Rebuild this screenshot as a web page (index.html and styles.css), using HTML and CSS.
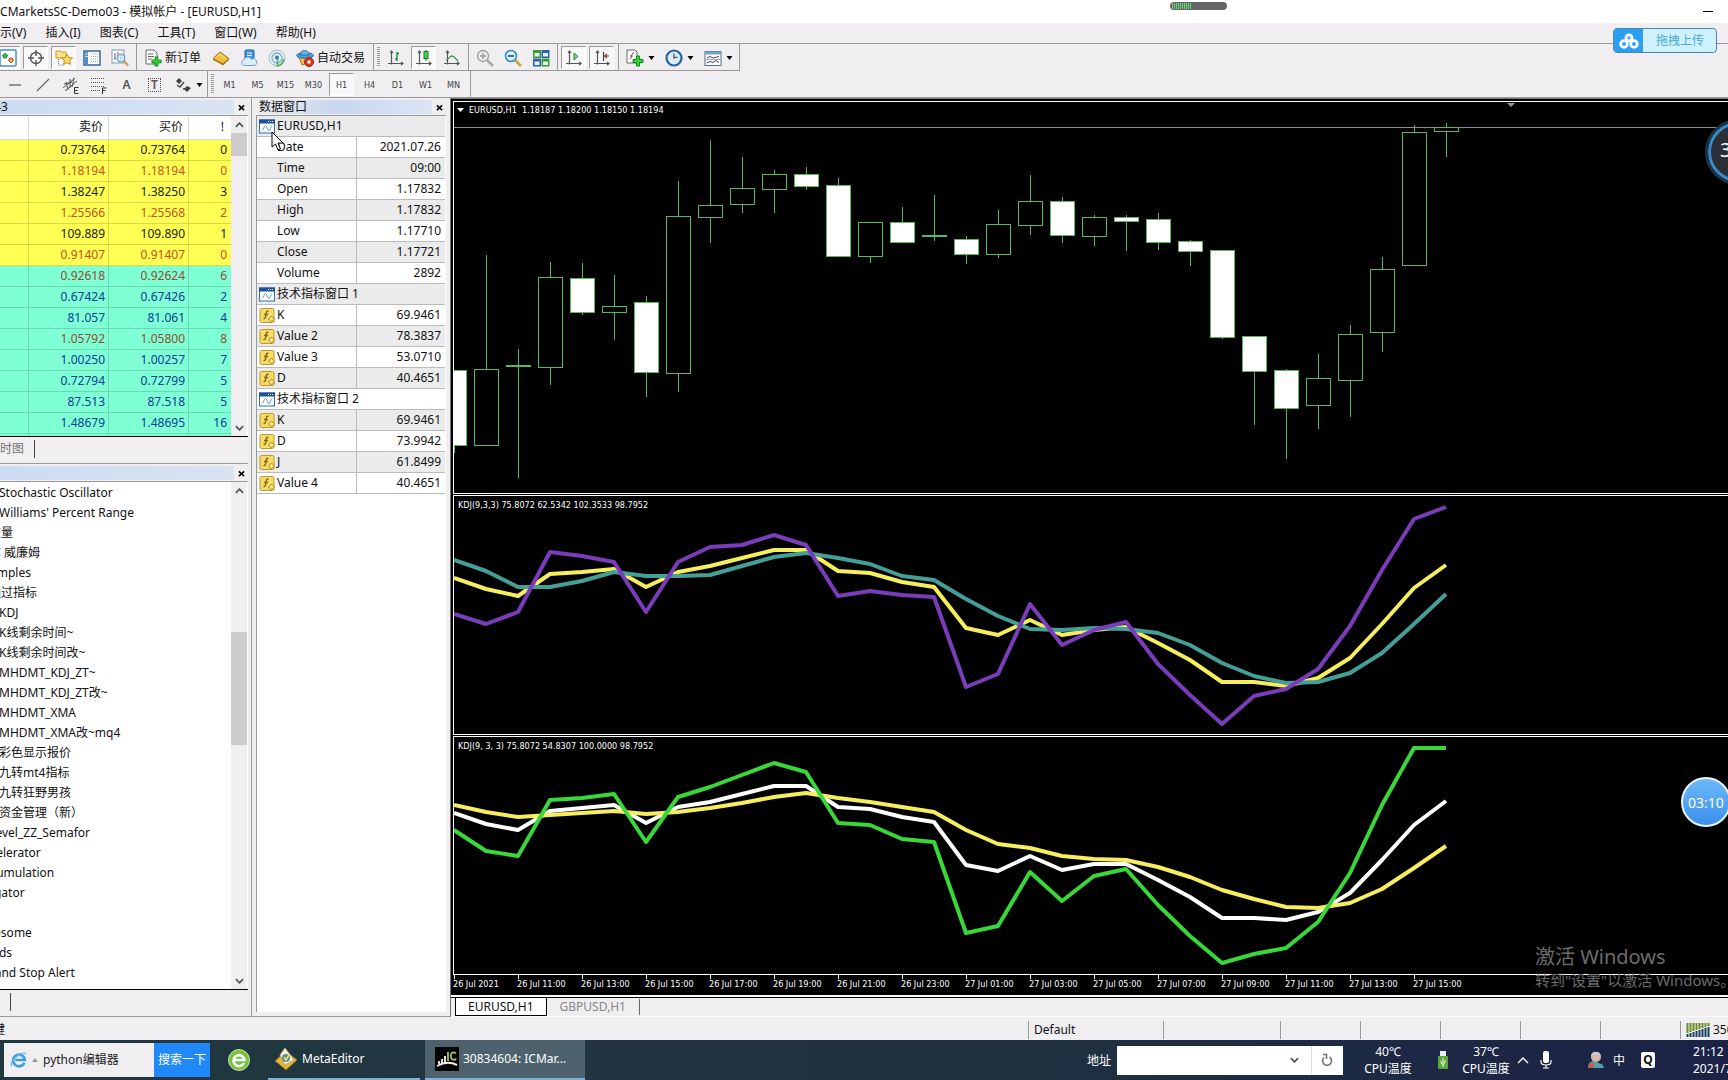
FILE: index.html
```html
<!DOCTYPE html>
<html lang="zh-CN">
<head>
  <meta charset="UTF-8">
  <meta name="viewport" content="width=device-width, initial-scale=1.0">
  <title>ICMarketsSC-Demo03 - [EURUSD,H1]</title>
  <link rel="stylesheet" href="styles.css">
</head>
<body>
  <svg class="sprite" aria-hidden="true">
    <symbol id="i-close" viewBox="0 0 8 8"><path d="M1 1.5l6 5.5M7 1.5L1 7" stroke="#000" stroke-width="1.8"/></symbol>
    <symbol id="i-up" viewBox="0 0 10 6"><path d="M1 5l4-4 4 4" fill="none" stroke="#555" stroke-width="2"/></symbol>
    <symbol id="i-down" viewBox="0 0 10 6"><path d="M1 1l4 4 4-4" fill="none" stroke="#555" stroke-width="2"/></symbol>
    <symbol id="i-drop" viewBox="0 0 6 4"><path d="M0 0h6L3 4z" fill="#000"/></symbol>
    <symbol id="i-window" viewBox="0 0 16 14">
      <rect x=".5" y=".5" width="15" height="13" fill="#fff" stroke="#2c6cb4"/>
      <path d="M0 0h16v4H0z" fill="#1d4f9c"/><path d="M9 2h1M11 2h1M13 2h1" stroke="#fff"/>
      <path d="M3 11c2-1 2-5 3.500-5s2 5 3.500 5 1.500-4 3-5" fill="none" stroke="#5a9ac8"/>
    </symbol>
    <symbol id="i-func" viewBox="0 0 16 15">
      <rect x="1" y=".5" width="14" height="14" rx="1.500" fill="#f3dc6a" stroke="#c09a28"/>
      <path d="M9.500 3.500c-2-.8-2.300 1-2.500 3S6.500 11 4.500 10.500M5 6.500h4" fill="none" stroke="#8a6410" stroke-width="1.400"/>
      <path d="M12.500 8l3 3-3 3-3-3z" fill="#f8e788" stroke="#a8841c"/>
    </symbol>
    <symbol id="i-plus" viewBox="0 0 12 12"><path d="M4.500 1h3v3.500H11v3H7.500V11h-3V7.500H1v-3h3.500z" fill="#35d435" stroke="#0b8a16"/></symbol>
    <symbol id="i-axes" viewBox="0 0 18 18"><path d="M4.500 2v13.500M1 14.500h14.500M3 4l1.500-2L6 4M14 13l2 1.500-2 1.500" fill="none" stroke="#555" stroke-width="1.200"/></symbol>
  </svg>

  <header class="titlebar">
    <h1 class="title">ICMarketsSC-Demo03 - 模拟帐户 - [EURUSD,H1]</h1>
    <div class="rec-pill"></div>
    <button class="minimize" aria-label="最小化"></button>
  </header>

  <nav class="menubar">
    <button>显示(V)</button>
    <button>插入(I)</button>
    <button>图表(C)</button>
    <button>工具(T)</button>
    <button>窗口(W)</button>
    <button>帮助(H)</button>
  </nav>

  <div class="toolbar main-tools">
    <button class="tool on" aria-label="市场报价"><svg viewBox="0 0 18 18"><rect x="1" y="1" width="16" height="16" rx="1" fill="#fff" stroke="#4a90c8" stroke-width="1.500"/><path d="M6 4l3 3H7.500v2h-3V7H3z" fill="#3bbf5b" stroke="#11813a" stroke-width=".8"/><path d="M12 14l-3-3h1.500V9h3v2H15z" fill="#f2a45c" stroke="#b5401c" stroke-width=".8"/></svg></button>
    <button class="tool on" aria-label="数据窗口"><svg viewBox="0 0 18 18"><circle cx="9" cy="9" r="5.500" fill="none" stroke="#555" stroke-width="1.400"/><path d="M9 1v6M9 11v6M1 9h6M11 9h6" stroke="#555" stroke-width="1.400"/></svg></button>
    <button class="tool on" aria-label="导航"><svg viewBox="0 0 18 18"><path d="M1 2h4l1 1h5v6H1z" fill="#ffe58a" stroke="#c79a20"/><path d="M3.500 10v6h6" fill="none" stroke="#777" stroke-dasharray="1 1"/><path d="M12 5l1.600 3.600 3.900.4-2.900 2.600.8 3.900-3.400-2-3.400 2 .8-3.900L6.500 9l3.900-.4z" fill="#ffdf5e" stroke="#c08a14"/></svg></button>
    <button class="tool" aria-label="终端"><svg viewBox="0 0 18 18"><rect x="1" y="2" width="16" height="14" fill="#fff" stroke="#33689c" stroke-width="1.500"/><path d="M2 3h3v12H2z" fill="#4c8fce"/><path d="M8 5h8M8 7.500h8M8 10h8M8 12.500h8" stroke="#9ab0c6" stroke-dasharray="1 1"/><path d="M2.500 5h2M2.500 7.500h2" stroke="#fff"/></svg></button>
    <button class="tool" aria-label="策略测试"><svg viewBox="0 0 18 18"><rect x="1" y="1" width="12" height="13" fill="#f4f8fb" stroke="#8a9bac"/><path d="M4 4v7M3 9h1M7 3v6M10 5v6M10 6h2" stroke="#667"/><circle cx="10" cy="9" r="4" fill="#cfe7f8" fill-opacity=".8" stroke="#5d92bd"/><path d="M13 12l4 4.500" stroke="#c8a04a" stroke-width="2.400"/></svg></button>
    <span class="sep"></span>
    <button class="tool wide"><svg viewBox="0 0 18 18"><path d="M2 1h8l3 3v11H2z" fill="#fff" stroke="#666"/><path d="M4 5h5M4 7.500h6M4 10h4" stroke="#666"/><use href="#i-plus" x="7" y="7" width="11" height="11"/></svg>新订单</button>
    <button class="tool" aria-label="MetaEditor"><svg viewBox="0 0 18 18"><path d="M1 9.500L8 3l9 6.500-6 6.500z" fill="#f0bf3e" stroke="#9d6d12"/><path d="M1 9.500L11 14l6-4.500v1.500L11 16 1 11z" fill="#b07a16"/><path d="M5 8l3-3 5 4" stroke="#ffe9a2" fill="none"/></svg></button>
    <button class="tool" aria-label="虚拟主机"><svg viewBox="0 0 18 18"><rect x="5" y="1" width="9" height="9" rx="1" fill="#3e96dc" stroke="#1e62a4"/><path d="M7 4h5M7 6.500h5" stroke="#e5f4ff"/><path d="M3.500 16.500a3 3 0 010-5.500 4.500 4.500 0 018-1 3.300 3.300 0 013.500 6.500z" fill="#dceefb" stroke="#6f9fc8"/></svg></button>
    <button class="tool" aria-label="信号"><svg viewBox="0 0 18 18" fill="none"><circle cx="9" cy="9" r="8" fill="#e3eff2" stroke="#9dbfd0"/><circle cx="9" cy="9" r="5" stroke="#7fb0c4" stroke-width="1.300"/><circle cx="9" cy="8.500" r="2" fill="#2e7ac0"/><path d="M9.500 10v7c4-1 6-4 6-7" stroke="#58b058" stroke-width="1.600"/></svg></button>
    <button class="tool wide"><svg viewBox="0 0 18 18"><path d="M3 8h11l-2 6-6 2z" fill="#f0c04a" stroke="#a87a18"/><ellipse cx="9" cy="6.500" rx="8.500" ry="2.800" fill="#4c9fd6" stroke="#2a70a8"/><path d="M4 6c0-6 9-6 9 0z" fill="#64b4e4" stroke="#2a70a8"/><circle cx="13" cy="13" r="4.500" fill="#d5391c" stroke="#9c2410"/><path d="M11.500 11.500h3v3h-3z" fill="#fff"/></svg>自动交易</button>
    <span class="sep"></span><span class="grip"></span>
    <button class="tool" aria-label="柱状图"><svg viewBox="0 0 18 18"><use href="#i-axes"/><path d="M10 3v9M8 10h2M10 4.500h2" stroke="#1e8a3a" stroke-width="1.400" fill="none"/></svg></button>
    <button class="tool on" aria-label="阴阳烛"><svg viewBox="0 0 18 18"><use href="#i-axes"/><path d="M11 1v11" stroke="#167a2c"/><rect x="9" y="2.500" width="4" height="7" fill="#3cd65c" stroke="#167a2c"/></svg></button>
    <button class="tool" aria-label="折线图"><svg viewBox="0 0 18 18"><use href="#i-axes"/><path d="M3 11c3-1 4-4 6-4s3 2 6 5" stroke="#3c9a50" stroke-width="1.300" fill="none"/></svg></button>
    <span class="sep"></span>
    <button class="tool" aria-label="放大"><svg viewBox="0 0 18 18"><path d="M11 11l6 6" stroke="#aaa" stroke-width="2.600"/><circle cx="7" cy="7" r="5.500" fill="#eee" stroke="#999" stroke-width="1.300"/><path d="M4 7h6M7 4v6" stroke="#999" stroke-width="1.500"/></svg></button>
    <button class="tool" aria-label="缩小"><svg viewBox="0 0 18 18"><path d="M11 11l6 6" stroke="#d0a53c" stroke-width="2.800"/><circle cx="7" cy="7" r="5.500" fill="#d8effc" stroke="#2f86c8" stroke-width="1.500"/><path d="M4 7h6" stroke="#20649c" stroke-width="1.800"/></svg></button>
    <button class="tool" aria-label="平铺窗口"><svg viewBox="0 0 18 18"><path d="M1 1h8v8H1zM9.500 9.500h8v8h-8z" fill="#3b9b34"/><path d="M9.500 1h8v8h-8zM1 9.500h8v8H1z" fill="#2f62ac"/><path d="M2.500 4h5v3.500h-5zM11 4h5v3.500h-5zM2.500 12.500h5V16h-5zM11 12.500h5V16h-5z" fill="#e4f0f4"/></svg></button>
    <span class="sep"></span>
    <button class="tool on" aria-label="自动滚动"><svg viewBox="0 0 18 18"><use href="#i-axes"/><path d="M9 4l4 3.500L9 11z" fill="#7ddc8c" stroke="#1e8a3a"/></svg></button>
    <button class="tool on" aria-label="图表平移"><svg viewBox="0 0 18 18"><use href="#i-axes"/><path d="M10.500 3v9" stroke="#444" stroke-width="1.200"/><path d="M16 7h-4M14 5l-2.500 2L14 9" stroke="#8c3a2a" fill="none" stroke-width="1.200"/></svg></button>
    <span class="sep"></span>
    <button class="tool drop" aria-label="技术指标"><svg viewBox="0 0 18 18"><path d="M1 1h8l2 2v11H1z" fill="#fff" stroke="#666"/><path d="M8 4C5 3 6 10 4 10M4 7h3" stroke="#555" fill="none"/><use href="#i-plus" x="6" y="6" width="12" height="12"/></svg><svg class="arrow"><use href="#i-drop"/></svg></button>
    <button class="tool drop" aria-label="时间周期"><svg viewBox="0 0 18 18"><circle cx="9" cy="9" r="7.500" fill="#d8ecfa" stroke="#23639e" stroke-width="2.200"/><path d="M9 4.500V9l3.500-1" stroke="#444" stroke-width="1.200" fill="none"/></svg><svg class="arrow"><use href="#i-drop"/></svg></button>
    <button class="tool drop" aria-label="模板"><svg viewBox="0 0 18 18"><rect x="1" y="2.500" width="16" height="14" fill="#fff" stroke="#4a7094"/><path d="M1 2.500h16v3H1z" fill="#6fa4ce"/><path d="M3 9l3-1.500 3 1.500 6-1.500M3 14l3-1.500 3 1 3-2 3 2" stroke="#445" fill="none"/><path d="M1 10.500h16" stroke="#9ab"/></svg><svg class="arrow"><use href="#i-drop"/></svg></button>
  </div>

  <div class="toolbar line-tools">
    <button class="tool" aria-label="水平线"><svg viewBox="0 0 18 18"><path d="M3 9h12" stroke="#555" stroke-width="1.200"/></svg></button>
    <button class="tool" aria-label="趋势线"><svg viewBox="0 0 18 18"><path d="M3 15L15 3" stroke="#666" stroke-width="1.200"/></svg></button>
    <button class="tool" aria-label="等距通道"><svg viewBox="0 0 18 18"><path d="M1 12L13 2M3 15L15 5M4 6l2 8M8 3l0 9M12 2l-2 9M2 8l8-2" stroke="#555" fill="none"/><path d="M16.500 11.500h-4v6h4M12.500 14.500h3" stroke="#333" fill="none"/></svg></button>
    <button class="tool" aria-label="斐波那契"><svg viewBox="0 0 18 18"><path d="M1 2.500h14M1 6.500h14M1 10.500h14M1 14.500h9" stroke="#555" stroke-dasharray="1 1"/><path d="M16.500 12h-4v6M12.500 14.500h3" stroke="#333" fill="none"/></svg></button>
    <button class="tool letter" aria-label="文字">A</button>
    <button class="tool letter" aria-label="文字标签"><span class="label-box">T</span></button>
    <button class="tool drop" aria-label="箭头"><svg viewBox="0 0 18 18"><path d="M5 2l3 3-3 3-3-3zM13 10l4 2-4 4-3-3z" fill="#444"/><path d="M3 9l3 2 4-5M9 13l6-1" stroke="#444" stroke-width="1.400" fill="none"/></svg><svg class="arrow"><use href="#i-drop"/></svg></button>
    <span class="sep"></span><span class="grip"></span>
    <button class="tool period">M1</button>
    <button class="tool period">M5</button>
    <button class="tool period">M15</button>
    <button class="tool period">M30</button>
    <button class="tool period on">H1</button>
    <button class="tool period">H4</button>
    <button class="tool period">D1</button>
    <button class="tool period">W1</button>
    <button class="tool period">MN</button>
    <span class="sep"></span>
  </div>

  <main class="workspace">
    <div class="side">
      <section class="market">
        <div class="panel-title"><span>市场报价: 21:12:43</span><button aria-label="关闭"><svg><use href="#i-close"/></svg></button></div>
        <div class="scroll-area">
          <table class="quotes">
            <thead><tr><th></th><th>卖价</th><th>买价</th><th>!</th></tr></thead>
            <tbody id="quotes"></tbody>
          </table>
          <div class="scrollbar">
            <button aria-label="向上"><svg><use href="#i-up"/></svg></button>
            <div class="thumb"></div>
            <button aria-label="向下"><svg><use href="#i-down"/></svg></button>
          </div>
        </div>
        <div class="panel-tabs"><button>即时图</button></div>
      </section>
      <section class="navigator">
        <div class="panel-title"><span></span><button aria-label="关闭"><svg><use href="#i-close"/></svg></button></div>
        <div class="scroll-area">
          <ul class="tree">
            <li class="sub">Stochastic Oscillator</li>
            <li class="sub">Williams' Percent Range</li>
            <li>成交量</li>
            <li>比尔 威廉姆</li>
            <li>Examples</li>
            <li>已通过指标</li>
            <li class="sub">KDJ</li>
            <li class="sub">K线剩余时间~</li>
            <li class="sub">K线剩余时间改~</li>
            <li class="sub">MHDMT_KDJ_ZT~</li>
            <li class="sub">MHDMT_KDJ_ZT改~</li>
            <li class="sub">MHDMT_XMA</li>
            <li class="sub">MHDMT_XMA改~mq4</li>
            <li class="sub">彩色显示报价</li>
            <li class="sub">九转mt4指标</li>
            <li class="sub">九转狂野男孩</li>
            <li class="sub">资金管理（新）</li>
            <li>3_Level_ZZ_Semafor</li>
            <li>Accelerator</li>
            <li>Accumulation</li>
            <li>Alligator</li>
            <li>ATR</li>
            <li>Awesome</li>
            <li>Bands</li>
            <li>Be and Stop Alert</li>
          </ul>
          <div class="scrollbar">
            <button aria-label="向上"><svg><use href="#i-up"/></svg></button>
            <div class="thumb"></div>
            <button aria-label="向下"><svg><use href="#i-down"/></svg></button>
          </div>
        </div>
        <div class="panel-tabs"><button aria-label="常用"></button></div>
      </section>
    </div>

    <section class="data-window">
      <div class="panel-title"><span>数据窗口</span><button aria-label="关闭"><svg><use href="#i-close"/></svg></button></div>
      <div class="data-body">
        <table class="values">
          <colgroup><col class="name-col"><col></colgroup>
          <tbody id="values"></tbody>
        </table>
      </div>
    </section>

    <section class="charts">
      <div class="canvas">
        <div class="pane price">
          <p class="caption"><svg class="arrow"><path d="M0 0h7L3.500 4z" fill="#fff"/></svg>EURUSD,H1&nbsp; 1.18187 1.18200 1.18150 1.18194</p>
          <svg class="plot" id="price"></svg>
        </div>
        <div class="pane osc">
          <p class="caption">KDJ(9,3,3) 75.8072 62.5342 102.3533 98.7952</p>
          <svg class="plot" id="kdj1"></svg>
        </div>
        <div class="pane osc">
          <p class="caption">KDJ(9, 3, 3) 75.8072 54.8307 100.0000 98.7952</p>
          <svg class="plot" id="kdj2"></svg>
        </div>
        <div class="axis" id="axis"></div>
        <div class="watermark">
          <p class="big">激活 Windows</p>
          <p>转到"设置"以激活 Windows。</p>
        </div>
      </div>
      <div class="chart-tabs">
        <button class="active">EURUSD,H1</button>
        <button>GBPUSD,H1</button>
      </div>
    </section>
  </main>

  <footer class="status">
    <span class="help">请按F1键</span>
    <span class="cell profile">Default</span>
    <span class="cell date"></span>
    <span class="cell"></span>
    <span class="cell"></span>
    <span class="cell"></span>
    <span class="cell"></span>
    <span class="cell"></span>
    <span class="cell net"><svg viewBox="0 0 24 14"><path d="M1.500 0v10M4.500 0v9M7.500 0v8M10.500 0v7M13.500 0v6M16.500 0v5M19.500 0v4M22.500 0v3" stroke="#6b8a28" stroke-width="2"/><path d="M1.500 11v3M4.500 10v4M7.500 9v5M10.500 8v6M13.500 7v7M16.500 6v8M19.500 5v9M22.500 4v10" stroke="#17405c" stroke-width="2"/></svg>350/2 kb</span>
  </footer>

  <div class="taskbar">
    <div class="search">
      <svg class="ie" viewBox="0 0 20 20"><path d="M16 13a6.500 6.500 0 11.500-3H6" fill="none" stroke="#3ba0e2" stroke-width="3"/><path d="M2 17C-1 12 12 0 18 3" fill="none" stroke="#6dbcec" stroke-width="1.500"/></svg>
      <svg class="tri" viewBox="0 0 6 4"><path d="M0 4h6L3 0z" fill="#999"/></svg>
      <input type="text" value="python编辑器" aria-label="搜索">
      <button>搜索一下</button>
    </div>
    <button class="app-icon" aria-label="浏览器"><svg viewBox="0 0 22 22"><circle cx="11" cy="11" r="10.500" fill="#74c23c" stroke="#c9eaa6"/><path d="M16 14a5.500 5.500 0 11.500-3H6.500" fill="none" stroke="#fff" stroke-width="2.600"/></svg></button>
    <button class="task"><svg viewBox="0 0 24 24"><path d="M1 14L12 4l11 9-11 10z" fill="#e2b63c" stroke="#8d6a1a"/><path d="M6 8l5-7 9 12-9 5z" fill="#f5f0d6" stroke="#b8a878"/><circle cx="12" cy="11" r="4" fill="#5a8f84"/><path d="M10 10l2 3 3-5" stroke="#f4dc7a" stroke-width="1.500" fill="none"/></svg>MetaEditor</button>
    <button class="task current"><svg viewBox="0 0 24 24"><rect width="24" height="24" fill="#050505"/><path d="M4 17v-3M7 17v-5M10 17V9" stroke="#ddd" stroke-width="2"/><path d="M13 5v9M21 6.500c-4-3-6 1-5 4s4 3 5 1" stroke="#a8c06a" stroke-width="1.800" fill="none"/><path d="M2 19c7-4 14-4 20-1" stroke="#eee" stroke-width="2" fill="none"/></svg>30834604: ICMar...</button>

    <div class="tray">
      <label class="address-label" for="address">地址</label>
      <div class="address">
        <input type="text" id="address">
        <button aria-label="展开"><svg><use href="#i-down"/></svg></button>
        <button class="reload" aria-label="刷新"><svg viewBox="0 0 12 14"><path d="M8.500 4A4.500 4.500 0 113 4.500M2 1.500h3.500V6" fill="none" stroke="#777" stroke-width="1.600"/></svg></button>
      </div>
      <div class="temp">40℃<br>CPU温度</div>
      <svg class="usb" viewBox="0 0 10 18"><path d="M2 0h6v5H2z" fill="#eee"/><rect y="5" width="10" height="13" rx="1" fill="#5da83c"/><path d="M5 7v9M3 10v2l2 2 2-3V9" stroke="#e9ffe0" fill="none"/></svg>
      <div class="temp">37℃<br>CPU温度</div>
      <svg class="chev" viewBox="0 0 12 8"><path d="M1 7l5-5 5 5" fill="none" stroke="#fff" stroke-width="1.400"/></svg>
      <svg class="mic" viewBox="0 0 12 18"><rect x="3" width="6" height="12" rx="2" fill="#fff"/><path d="M1 9v2c0 4 10 4 10 0V9M6 14v3M3 17h6" fill="none" stroke="#fff" stroke-width="1.200"/></svg>
      <svg class="person" viewBox="0 0 18 18"><path d="M1 17c0-7 6-8 9-6s7 2 7 6z" fill="#5ba0a0"/><circle cx="9" cy="6" r="5" fill="#dcb8a8"/><path d="M4 5c0-5 9-6 10 0-3-2-7-2-10 0z" fill="#c9c9d2"/><path d="M1 17c0-4 3-6 5-5l1 5z" fill="#c05a54"/></svg>
      <span class="ime">中</span>
      <span class="q">Q</span>
      <div class="clock">21:12<br>2021/7/27</div>
    </div>
  </div>

  <!-- floating widgets -->
  <button class="upload"><span><svg viewBox="0 0 20 16"><g fill="none" stroke="#fff" stroke-width="2.800"><circle cx="10" cy="4.800" r="3"/><circle cx="5" cy="11" r="3.300"/><circle cx="15" cy="11" r="3.300"/></g></svg></span>拖拽上传</button>
  <div class="bubble">35</div>
  <div class="timer">03:10</div>
  <svg class="pointer" viewBox="0 0 13 20"><path d="M1 1v15l3.500-3 2.500 6 2.500-1-2.500-6h5z" fill="#fff" stroke="#000"/></svg>

  <script src="chart.js"></script>
</body>
</html>
```

FILE: chart.js
```js
const STEP = 32;

// bid, ask, spread, direction
const quotes = [
  ['0.73764', '0.73764', 0, ''], ['1.18194', '1.18194', 0, 'down'],
  ['1.38247', '1.38250', 3, ''], ['1.25566', '1.25568', 2, 'down'],
  ['109.889', '109.890', 1, ''], ['0.91407', '0.91407', 0, 'down'],
  ['0.92618', '0.92624', 6, 'down'], ['0.67424', '0.67426', 2, ''],
  ['81.057', '81.061', 4, ''], ['1.05792', '1.05800', 8, 'down'],
  ['1.00250', '1.00257', 7, ''], ['0.72794', '0.72799', 5, ''],
  ['87.513', '87.518', 5, ''], ['1.48679', '1.48695', 16, '']
];

document.getElementById('quotes').innerHTML = quotes.map(([bid, ask, spread, dir], i) =>
  `<tr class="${i < 6 ? 'major' : 'cross'} ${dir}"><td></td><td>${bid}</td><td>${ask}</td><td>${spread}</td></tr>`
).join('') + '<tr class="cross rest"><td></td><td></td><td></td><td></td></tr>';

// [label, value, has icon]; rows without a value are group headers
const values = [
  ['EURUSD,H1'],
  ['Date', '2021.07.26'], ['Time', '09:00'], ['Open', '1.17832'], ['High', '1.17832'],
  ['Low', '1.17710'], ['Close', '1.17721'], ['Volume', '2892'],
  ['技术指标窗口 1'],
  ['K', '69.9461', 1], ['Value 2', '78.3837', 1], ['Value 3', '53.0710', 1], ['D', '40.4651', 1],
  ['技术指标窗口 2'],
  ['K', '69.9461', 1], ['D', '73.9942', 1], ['J', '61.8499', 1], ['Value 4', '40.4651', 1]
];

document.getElementById('values').innerHTML = values.map(([label, value, icon]) => {
  if (value === undefined) {
    return `<tr><th colspan="2"><span><svg><use href="#i-window"/></svg>${label}</span></th></tr>`;
  }
  const svg = icon ? '<svg><use href="#i-func"/></svg>' : '<svg></svg>';
  return `<tr><th><span>${svg}${label}</span></th><td>${value}</td></tr>`;
}).join('');

// high, top, bottom, low, filled
const candles = [
  [267, 267, 342, 350, 1], [152, 266, 342, 342, 0], [246, 262, 263, 375, 0], [159, 174, 264, 282, 0],
  [160, 175, 209, 212, 1], [172, 203, 209, 237, 0], [193, 199, 269, 294, 1], [78, 113, 270, 289, 0],
  [37, 102, 114, 140, 0], [54, 85, 101, 110, 0], [67, 71, 86, 110, 0], [64, 71, 83, 87, 1],
  [75, 82, 153, 153, 1], [119, 119, 153, 160, 0], [104, 119, 139, 139, 1], [92, 132, 133, 138, 0],
  [133, 136, 151, 161, 1], [107, 121, 151, 155, 0], [72, 98, 122, 132, 0], [94, 98, 132, 140, 1],
  [112, 114, 133, 143, 0], [112, 114, 118, 148, 1], [110, 116, 139, 147, 1], [137, 138, 148, 163, 1],
  [147, 147, 234, 236, 1], [233, 233, 268, 322, 1], [266, 267, 305, 356, 1], [251, 275, 302, 326, 0],
  [222, 231, 277, 314, 0], [154, 166, 229, 249, 0], [22, 29, 162, 162, 0], [20, 24, 28, 54, 0]
];

document.getElementById('price').innerHTML =
  '<path class="level" d="M0 24.5h4000"/><path class="shift" d="M1052 -1h10l-5 5z"/>' +
  candles.map(([high, top, bottom, low, filled], i) => {
    const x = i * STEP + 0.5;
    return `<g class="candle${filled ? ' filled' : ''}">
      <path d="M${x} ${high}V${top}M${x} ${bottom}V${low}"/>
      <rect x="${x - 12}" y="${top + 0.5}" width="24" height="${bottom - top}"/>
    </g>`;
  }).join('');

const line = (cls, ys) =>
  `<polyline class="line ${cls}" points="${ys.map((y, i) => `${i * STEP},${y}`).join(' ')}"/>`;

document.getElementById('kdj1').innerHTML =
  line('yellow', [82, 93, 100, 78, 76, 73, 91, 76, 70, 62, 54, 54, 75, 77, 86, 91, 132, 139, 124, 139, 134, 131, 147, 164, 186, 186, 190, 182, 162, 128, 92, 69]) +
  line('teal', [64, 75, 91, 91, 85, 76, 80, 80, 79, 70, 61, 57, 62, 68, 80, 84, 103, 120, 133, 134, 132, 133, 137, 149, 167, 180, 187, 186, 177, 157, 128, 98]) +
  line('purple', [118, 128, 116, 56, 60, 66, 116, 66, 51, 49, 39, 49, 100, 95, 99, 101, 191, 178, 108, 149, 134, 126, 168, 199, 228, 200, 193, 173, 130, 74, 23, 11]);

document.getElementById('kdj2').innerHTML =
  line('white', [76, 87, 93, 74, 71, 68, 86, 70, 65, 57, 49, 49, 70, 72, 80, 85, 128, 134, 119, 133, 127, 127, 143, 160, 181, 181, 183, 175, 156, 123, 88, 64]) +
  line('yellow', [68, 75, 80, 78, 76, 74, 77, 75, 71, 66, 60, 56, 61, 65, 70, 75, 93, 107, 111, 119, 122, 123, 130, 140, 153, 162, 170, 171, 166, 152, 131, 109]) +
  line('green', [93, 114, 119, 63, 61, 57, 105, 60, 50, 38, 26, 35, 86, 88, 102, 105, 196, 189, 135, 164, 139, 132, 168, 199, 226, 217, 211, 185, 136, 68, 11, 11]);

const times = ['26 Jul 2021', '26 Jul 11:00', '26 Jul 13:00', '26 Jul 15:00', '26 Jul 17:00',
  '26 Jul 19:00', '26 Jul 21:00', '26 Jul 23:00', '27 Jul 01:00', '27 Jul 03:00', '27 Jul 05:00',
  '27 Jul 07:00', '27 Jul 09:00', '27 Jul 11:00', '27 Jul 13:00', '27 Jul 15:00'];
document.getElementById('axis').innerHTML = times.map(t => `<span>${t}</span>`).join('');
```

FILE: styles.css
```css
* {
  margin: 0;
  padding: 0;
  box-sizing: border-box;
}

body {
  height: 100vh;
  display: flex;
  flex-direction: column;
  overflow: hidden;
  background-color: #f0eef1;
  font-family: "Noto Sans", "Noto Sans CJK SC", sans-serif;
  font-size: 12px;
  line-height: 20px;
  color: #111;
  white-space: nowrap;
}

button, input {
  font: inherit;
  color: inherit;
  border: none;
  background: none;
}

svg { display: block; flex: none; }
.sprite { position: absolute; width: 0; height: 0; }

/* title + menu */
.titlebar {
  height: 23px;
  flex: none;
  display: flex;
  align-items: center;
  background-color: #fff;
}

.title {
  font-size: 12px;
  font-weight: 400;
  margin-left: -4px;
}

.rec-pill {
  position: absolute;
  left: 1170px;
  top: 2px;
  width: 57px;
  height: 8px;
  border-radius: 4px;
  background: repeating-linear-gradient(90deg, #7fc98a 0 1px, #4c7a54 1px 2px) 2px 1px / 20px 6px no-repeat #666;
}

.minimize {
  width: 10px;
  height: 1px;
  margin-left: auto;
  margin-right: 15px;
  background-color: #000;
}

.menubar {
  height: 21px;
  flex: none;
  display: flex;
  gap: 19px;
  padding-bottom: 1px;
  border-bottom: 1px solid #999;
}

.menubar button:first-child { margin-left: -12px; }

/* toolbars */
.toolbar {
  height: 27px;
  flex: none;
  display: flex;
  align-items: center;
  border-bottom: 1px solid #999;
}

.main-tools {
  width: fit-content;
  margin-left: -5px;
  border-right: 1px solid #999;
}

.line-tools { padding-left: 2px; }

.tool {
  height: 23px;
  min-width: 25px;
  margin-top: 1px;
  margin-right: 3px;
  display: flex;
  align-items: center;
  justify-content: center;
  border: 1px solid transparent;
}

.tool svg { width: 18px; height: 18px; }
.tool .arrow, .caption .arrow { width: 7px; height: 4px; }

.tool.on {
  background-color: #f8f7f9;
  border-color: #999 #fff #fff #999;
}

.tool.wide { gap: 3px; padding: 0 3px; }
.tool.drop { width: 36px; gap: 4px; }
.line-tools .tool.drop { margin-right: 0; }
.letter { font-size: 12px; font-weight: 600; color: #555; }

.label-box {
  width: 13px;
  height: 14px;
  line-height: 12px;
  border: 1px dotted #555;
}

.period {
  font-family: "DejaVu Sans Condensed", "DejaVu Sans", sans-serif;
  font-size: 9px;
  color: #444;
}

.sep {
  width: 1px;
  height: 100%;
  margin: 0 3px 0 1px;
  background-color: #999;
}

.grip {
  width: 3px;
  height: 20px;
  margin-right: 3px;
  background: repeating-linear-gradient(#999 0 1px, transparent 1px 2px);
}

/* docked panels */
.workspace {
  flex: 1;
  min-height: 0;
  display: flex;
}

.side {
  width: 252px;
  flex: none;
  display: flex;
  flex-direction: column;
  padding-right: 3px;
  border-right: 1px solid #999;
  border-bottom: 1px solid #999;
}

.panel-title {
  height: 18px;
  flex: none;
  display: flex;
  align-items: center;
  padding-top: 1px;
  border-bottom: 1px solid #999;
  line-height: 16px;
}

.panel-title span {
  flex: 1;
  height: 14px;
  line-height: 13px;
  overflow: hidden;
  background: linear-gradient(90deg, #cbdcf2, #d9e3f2);
}

.panel-title button { width: 14px; display: flex; justify-content: center; }
.panel-title svg { width: 7px; height: 7px; }

.market .panel-title span { text-indent: -94px; }

.scroll-area {
  display: flex;
  border-bottom: 1px solid #000;
  background-color: #fff;
}

.market .scroll-area { height: 321px; overflow: hidden; }
.navigator .scroll-area { flex: 1; min-height: 0; }

.scrollbar {
  width: 16px;
  margin-right: 1px;
  display: flex;
  flex-direction: column;
  background-color: #f0eef1;
}

.scrollbar button {
  height: 17px;
  display: flex;
  align-items: center;
  justify-content: center;
}

.scrollbar svg { width: 9px; height: 6px; }
.thumb { height: 23px; background-color: #cdcbce; margin-bottom: auto; }
.navigator .thumb { height: 113px; margin-top: 133px; }

.quotes {
  width: 231px;
  flex: none;
  table-layout: fixed;
  border-spacing: 0;
}

.quotes th, .quotes td {
  width: 80px;
  height: 21px;
  padding-right: 3px;
  line-height: 20px;
  text-align: right;
  font-weight: 400;
  border-right: 1px solid rgba(0, 0, 0, 0.15);
  border-bottom: 1px solid rgba(0, 0, 0, 0.15);
}

.quotes th { height: 24px; padding: 0 5px 2px 0; }
.quotes th:first-child { width: 29px; }
.quotes th:last-child { width: 42px; padding-right: 7px; }
.quotes tr > :last-child { border-right: none; }
.quotes td:last-child { padding-right: 4px; }

.major { background-color: #ffff54; color: #222; }
.major.down { color: #c8501a; }
.cross { background-color: #7fffd4; color: #0c3c96; }
.cross.down { color: #8c5034; }

.panel-tabs {
  height: 26px;
  flex: none;
  display: flex;
  align-items: flex-start;
  padding-top: 3px;
  color: #777;
}

.panel-tabs button {
  height: 18px;
  line-height: 18px;
  padding-right: 10px;
  margin-left: -12px;
  border-right: 1px solid #444;
}

.navigator .panel-tabs button { width: 23px; }

.market { border-bottom: 1px solid #999; }

.navigator {
  flex: 1;
  min-height: 0;
  display: flex;
  flex-direction: column;
}

.tree {
  flex: 1;
  list-style: none;
  margin-left: -23px;
  padding-top: 1px;
  overflow: hidden;
}

.tree li { height: 20px; }
.tree .sub { padding-left: 22px; }

.data-window {
  width: 199px;
  flex: none;
  display: flex;
  flex-direction: column;
  padding: 0 4px 4px 4px;
  border-right: 1px solid #777;
  border-bottom: 1px solid #999;
}

.data-window .panel-title span {
  padding-left: 3px;
  background: linear-gradient(90deg, #f0eef1, #c9d6ee 45%, #dbe5f4);
}

.data-body {
  flex: 1;
  border-left: 1px solid #999;
  background-color: #fff;
}

.values { width: 188px; table-layout: fixed; border-spacing: 0; }
.name-col { width: 99px; }
.values tr:nth-child(odd) { background-color: #ebebeb; }

.values th, .values td {
  height: 21px;
  line-height: 20px;
  font-weight: 400;
  text-align: left;
  border-bottom: 1px solid #bbb;
}

.values th { padding-left: 2px; }
.values th span { display: flex; align-items: center; gap: 2px; }
.values svg { width: 16px; height: 15px; }
.values td { padding-right: 4px; text-align: right; border-left: 1px solid #bbb; }

/* charts */
.charts {
  flex: 1;
  min-width: 0;
  display: flex;
  flex-direction: column;
}

.canvas {
  position: relative;
  flex: 1;
  min-height: 0;
  display: flex;
  flex-direction: column;
  padding-left: 2px;
  padding-top: 2px;
  border-top: 1px solid #777;
  background-color: #000;
  color: #fff;
  overflow: hidden;
}

.pane {
  position: relative;
  flex: none;
  margin-bottom: 1px;
  border: 1px solid #fff;
  border-right: none;
}

.price { flex: 1; min-height: 0; padding-top: 1px; }
.osc { height: 240px; }
.osc + .osc { height: 239px; margin-bottom: 0; }
.plot { width: 100%; height: 100%; }

.caption {
  position: absolute;
  left: 4px;
  top: 2px;
  display: flex;
  align-items: center;
  gap: 5px;
  line-height: 14px;
}

.caption, .axis {
  font-family: "DejaVu Sans Condensed", "DejaVu Sans", sans-serif;
  font-size: 9px;
}

.price .caption { left: 3px; top: 1px; }

.level { stroke: #8a8c94; shape-rendering: crispEdges; }
.shift { fill: #999; }
.candle { fill: #000; stroke: #5cb85c; shape-rendering: crispEdges; }
.candle.filled { fill: #fff; }

.line { fill: none; stroke-width: 4; stroke-linejoin: round; }
.yellow { stroke: #f6ee5c; }
.teal { stroke: #43a098; }
.purple { stroke: #7a3cba; }
.white { stroke: #fff; }
.green { stroke: #38d838; }

.axis { height: 20px; flex: none; display: flex; }

.axis span {
  width: 64px;
  flex: none;
  line-height: 18px;
  background: linear-gradient(#fff, #fff) 1px 0 / 1px 4px no-repeat;
}

.watermark {
  position: absolute;
  left: 1084px;
  bottom: 5px;
  font-size: 15px;
  line-height: 20px;
  color: #6c6c6c;
}

.watermark .big { font-size: 20px; line-height: 26px; }

.chart-tabs {
  height: 22px;
  flex: none;
  display: flex;
  align-items: flex-start;
  padding-left: 4px;
  border-top: 2px solid #fff;
  box-shadow: inset 0 1px #000;
  border-bottom: 1px solid #fff;
}

.chart-tabs button {
  height: 16px;
  margin-top: 2px;
  padding: 0 13px;
  line-height: 16px;
  color: #888;
  border-right: 1px solid #666;
}

.chart-tabs .active {
  height: 18px;
  margin: 1px 0 0;
  padding: 0 12px;
  line-height: 18px;
  background-color: #fff;
  color: #111;
  border: 1px solid #000;
  border-top: none;
}

/* status bar */
.status {
  height: 23px;
  flex: none;
  display: flex;
  align-items: center;
  padding-top: 2px;
}

.help { flex: 1; margin-left: -44px; }

.cell {
  width: 80px;
  height: 18px;
  line-height: 18px;
  padding-left: 5px;
  border-left: 1px solid #999;
}

.profile { width: 135px; }
.date { width: 117px; }
.net { width: 48px; display: flex; align-items: center; gap: 3px; overflow: hidden; }
.net svg { width: 24px; height: 14px; }

/* windows taskbar */
.taskbar {
  height: 40px;
  flex: none;
  display: flex;
  align-items: center;
  padding-left: 4px;
  background: linear-gradient(90deg, #203840, #21343f 40%, #1f2f42 65%, #1b2246);
  color: #fff;
}

.search {
  width: 206px;
  height: 34px;
  display: flex;
  align-items: center;
  background-color: #f0eef1;
}

.ie { width: 18px; height: 18px; margin-left: 6px; }
.tri { width: 6px; height: 4px; margin: 0 5px 0 4px; }
.search input { flex: 1; min-width: 0; color: #222; }
.search button { width: 56px; height: 34px; background-color: #2088f8; }

.app-icon { width: 58px; display: flex; justify-content: center; }
.app-icon svg { width: 22px; height: 22px; }

.task {
  width: 152px;
  height: 40px;
  margin-right: 5px;
  padding-left: 6px;
  display: flex;
  align-items: center;
  gap: 4px;
  border-bottom: 2px solid #7eb0dc;
}

.task svg { width: 24px; height: 24px; }
.task.current { width: 160px; padding-left: 10px; background-color: #4e626d; }

.tray {
  margin-left: auto;
  display: flex;
  align-items: center;
  line-height: 17px;
  flex: none;
}

.address {
  width: 226px;
  height: 29px;
  margin: 0 20px 0 6px;
  display: flex;
  align-items: center;
  background-color: #fff;
}

.address input { flex: 1; min-width: 0; height: 29px; color: #222; }
.address button { width: 32px; height: 29px; display: flex; align-items: center; justify-content: center; }
.address button svg { width: 9px; height: 6px; }
.address .reload { border-left: 1px solid #ddd; }
.address .reload svg { width: 12px; height: 14px; }

.temp { width: 50px; text-align: center; }
.usb { width: 10px; height: 18px; margin: 0 13px 0 25px; }
.chev { width: 12px; height: 8px; margin-left: 6px; }
.mic { width: 12px; height: 18px; margin: 0 35px 0 11px; }
.person { width: 18px; height: 18px; }
.ime { margin: 0 16px 0 8px; }

.q {
  width: 14px;
  height: 16px;
  line-height: 15px;
  border-radius: 2px;
  background-color: #fff;
  color: #111;
  font-weight: 700;
  text-align: center;
}

.clock { width: 35px; margin-left: 38px; }

/* overlays */
.upload {
  position: absolute;
  right: 11px;
  top: 28px;
  width: 104px;
  height: 25px;
  display: flex;
  align-items: center;
  gap: 13px;
  border: 1px solid #4a86b4;
  border-radius: 4px;
  background-color: #cdf2fd;
  color: #4aa8d4;
  overflow: hidden;
}

.upload span {
  width: 29px;
  height: 25px;
  display: flex;
  align-items: center;
  justify-content: center;
  background-color: #2d9ff0;
}

.upload svg { width: 20px; height: 16px; }

.bubble {
  position: absolute;
  right: -40px;
  top: 122px;
  width: 60px;
  height: 60px;
  padding-left: 9px;
  line-height: 50px;
  border: 3px solid #3d8cc8;
  outline: 3px solid #1c3448;
  border-radius: 50%;
  background-color: #2c2e38;
  color: #fff;
  font-size: 20px;
}

.timer {
  position: absolute;
  right: -3px;
  top: 777px;
  width: 50px;
  height: 50px;
  line-height: 48px;
  border: 2px solid #e8f4ff;
  border-radius: 50%;
  background: linear-gradient(#6cb8f8, #3a90ec);
  color: #fff;
  font-size: 14px;
  text-align: center;
}

.pointer { position: absolute; left: 271px; top: 131px; width: 13px; height: 20px; }
```
